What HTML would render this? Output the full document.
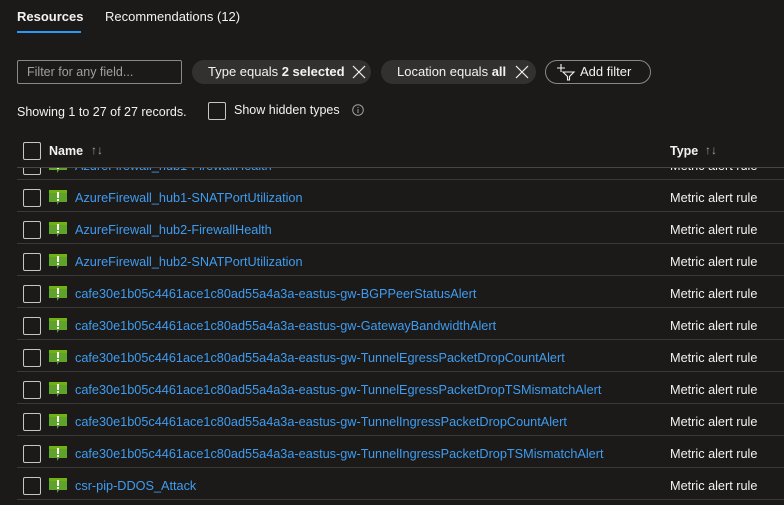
<!DOCTYPE html>
<html><head><style>
*{box-sizing:border-box;margin:0;padding:0}
body{width:784px;height:505px;overflow:hidden;background:#1b1a19;font-family:"Liberation Sans",sans-serif;color:#f3f2f1;font-size:13px;position:relative}
.a{position:absolute;white-space:nowrap}
.cb{position:absolute;width:18px;height:18px;border:1px solid #c8c6c4;border-radius:2px}
.pill{position:absolute;top:60px;height:24px;border-radius:12px;background:#323130;line-height:24px;font-size:13px;white-space:nowrap}
.x{position:absolute;top:5px;width:14px;height:14px}
.rows{position:absolute;left:0;top:168px;width:784px;height:337px;overflow:hidden}
.row{position:absolute;left:17px;width:767px;height:32px;border-bottom:1px solid #3b3a39}
.row .cb{left:6px;top:9px}
.row .ic{position:absolute;left:32px;top:10px}
.row .n{position:absolute;left:58px;top:11px;color:#3f9cf0;font-size:12.7px}
.row .t{position:absolute;left:653px;top:11px;font-size:12.7px}
</style></head><body>
<div class="a" style="left:17px;top:9px;font-weight:bold;font-size:13px">Resources</div>
<div class="a" style="left:17px;top:31px;width:64px;height:2px;background:#2899f5"></div>
<div class="a" style="left:105px;top:9px;font-size:13px">Recommendations (12)</div>
<div class="a" style="left:17px;top:60px;width:165px;height:24px;border:1px solid #8a8886;border-radius:2px;padding-left:9px;line-height:22px;color:#a19f9d;font-size:12.5px">Filter for any field...</div>
<div class="pill" style="left:192px;width:179px;padding-left:16px">Type equals <b>2 selected</b>
<svg class="x" style="left:160px" viewBox="0 0 14 14"><path d="M1 1L13 13M13 1L1 13" stroke="#f3f2f1" stroke-width="1.2"/></svg></div>
<div class="pill" style="left:381px;width:155px;padding-left:16px">Location equals <b>all</b>
<svg class="x" style="left:134px" viewBox="0 0 14 14"><path d="M1 1L13 13M13 1L1 13" stroke="#f3f2f1" stroke-width="1.2"/></svg></div>
<div class="pill" style="left:545px;width:106px;background:transparent;border:1px solid #8a8886;padding-left:34px;line-height:22px">Add filter
<svg style="position:absolute;left:10px;top:2px" width="20" height="18" viewBox="0 0 20 18"><path d="M5 1V9M1 5H9" stroke="#f3f2f1" stroke-width="1.1"/><path d="M7 9H18L13.5 13.5V17H11.5V13.5Z" fill="none" stroke="#f3f2f1" stroke-width="1.1"/></svg></div>
<div class="a" style="left:17px;top:105px;font-size:12.5px">Showing 1 to 27 of 27 records.</div>
<div class="cb" style="left:208px;top:102px"></div>
<div class="a" style="left:234px;top:103px;font-size:12.5px">Show hidden types</div>
<svg class="a" style="left:352px;top:104px" width="12" height="12" viewBox="0 0 12 12"><circle cx="6" cy="6" r="5.3" fill="none" stroke="#a19f9d"/><path d="M6 5V9M6 3V4" stroke="#a19f9d"/></svg>
<div class="cb" style="left:23px;top:142px"></div>
<div class="a" style="left:49px;top:144px;font-weight:bold;font-size:12.5px">Name</div>
<div class="a" style="left:91px;top:143px;color:#a19f9d;font-size:12px">↑↓</div>
<div class="a" style="left:670px;top:144px;font-weight:bold;font-size:12.5px">Type</div>
<div class="a" style="left:705px;top:143px;color:#a19f9d;font-size:12px">↑↓</div>
<div class="a" style="left:17px;top:167px;width:767px;height:1px;background:#484644"></div>
<div class="rows">
ROWS
</div>
<script>
var names=["AzureFirewall_hub1-FirewallHealth","AzureFirewall_hub1-SNATPortUtilization","AzureFirewall_hub2-FirewallHealth","AzureFirewall_hub2-SNATPortUtilization","cafe30e1b05c4461ace1c80ad55a4a3a-eastus-gw-BGPPeerStatusAlert","cafe30e1b05c4461ace1c80ad55a4a3a-eastus-gw-GatewayBandwidthAlert","cafe30e1b05c4461ace1c80ad55a4a3a-eastus-gw-TunnelEgressPacketDropCountAlert","cafe30e1b05c4461ace1c80ad55a4a3a-eastus-gw-TunnelEgressPacketDropTSMismatchAlert","cafe30e1b05c4461ace1c80ad55a4a3a-eastus-gw-TunnelIngressPacketDropCountAlert","cafe30e1b05c4461ace1c80ad55a4a3a-eastus-gw-TunnelIngressPacketDropTSMismatchAlert","csr-pip-DDOS_Attack"];
var h="";
names.forEach(function(n,i){var top=-20+32*i;
h+='<div class="row" style="top:'+top+'px"><div class="cb"></div><svg class="ic" width="18" height="16" viewBox="0 0 18 16"><path d="M0 0H18V12H10L8 15V12H0Z" fill="#5ea32a"/><path d="M0 0H18V3H0Z" fill="#7fba00" opacity=".6"/><rect x="8" y="2" width="2" height="6" fill="#fff"/><rect x="8" y="9" width="2" height="2" fill="#fff"/></svg><div class="n">'+n+'</div><div class="t">Metric alert rule</div></div>';});
document.querySelector('.rows').innerHTML=h;
</script>
</body></html>
